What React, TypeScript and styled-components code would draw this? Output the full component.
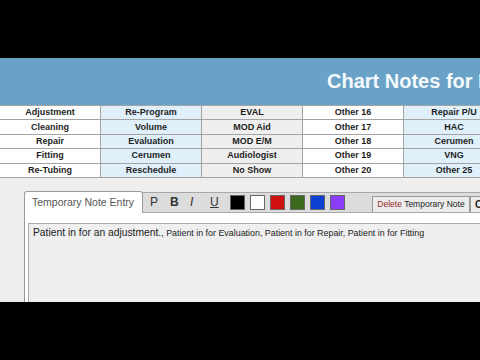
import styled, { createGlobalStyle } from "styled-components";

const Global = createGlobalStyle`
  html, body {
    margin: 0;
    padding: 0;
    background: #000;
    font-family: "Liberation Sans", Arial, sans-serif;
  }
`;

// letterbox frame
const Frame = styled.div`
  width: 480px;
  height: 360px;
  background: #000;
  padding-top: 58px;
  box-sizing: border-box;
  overflow: hidden;
`;

const Page = styled.div`
  width: 480px;
  height: 244px;
  background: #eeeeee;
  overflow: hidden;
`;

// Header TOP
const Header = styled.div`
  height: 47px;
  background: #69a2c6;
  display: flex;
  align-items: center;
  padding-left: 327px;
  color: #f4f9fc;
  font-weight: bold;
  font-size: 20px;
  white-space: nowrap;
  overflow: hidden;
`;

// Quick note table
const Table = styled.table`
  border-collapse: collapse;
  margin-left: -1px;
  border-top: 1px solid #8c9aa4;
`;

const Cell = styled.td<{ $bg: string }>`
  width: 100px;
  min-width: 100px;
  height: 13.4px;
  padding: 0;
  border: 1px solid #a4a4a4;
  background: ${(p) => p.$bg};
  color: #1e1e1e;
  font-size: 9px;
  font-weight: bold;
  text-align: center;
  line-height: 13px;
  white-space: nowrap;
`;

// Note panel
const Panel = styled.div`
  margin: 13px 0 0 24px;
  width: 500px;
`;

const TabRow = styled.div`
  display: flex;
  height: 22px;
`;

const Tab = styled.div`
  width: 119px;
  flex-shrink: 0;
  background: #fff;
  border: 1px solid #9a9a9a;
  border-bottom: none;
  border-radius: 3px 3px 0 0;
  color: #555;
  font-size: 10.5px;
  display: flex;
  align-items: center;
  padding-left: 7px;
  box-sizing: border-box;
  white-space: nowrap;
`;

const Toolbar = styled.div`
  flex: 1;
  background: #dcdcdc;
  border-top: 1px solid #a8a8a8;
  border-bottom: 1px solid #a8a8a8;
  display: flex;
  align-items: center;
  padding-left: 7px;
  margin-top: 1px;
`;

const Fmt = styled.span<{ $b?: boolean; $i?: boolean; $u?: boolean }>`
  width: 20px;
  font-size: 12px;
  color: #333;
  font-weight: ${(p) => (p.$b ? "bold" : "normal")};
  font-style: ${(p) => (p.$i ? "italic" : "normal")};
  text-decoration: ${(p) => (p.$u ? "underline" : "none")};
`;

const Swatch = styled.span<{ $c: string }>`
  width: 13px;
  height: 13px;
  margin-right: 5px;
  background: ${(p) => p.$c};
  border: 1px solid #666;
`;

const Spacer = styled.div`
  flex: 1;
`;

const ToolBtn = styled.button`
  align-self: flex-end;
  height: 16px;
  margin: 0;
  padding: 0 4px;
  background: #ececec;
  border: 1px solid #9a9a9a;
  border-bottom: none;
  font-family: inherit;
  font-size: 8.5px;
  color: #222;
  white-space: nowrap;
  text-align: left;
  cursor: pointer;
`;

const DelBtn = styled(ToolBtn)`
  width: 98px;
  text-align: center;
`;

const ClearBtn = styled(ToolBtn)`
  width: 54px;
  border-right: none;
  font-size: 10px;
`;

const Red = styled.span`
  color: #9a1f1f;
`;

const Body = styled.div`
  background: #fff;
  border-left: 1px solid #9a9a9a;
  padding: 10px 0 0 3px;
`;

const NoteBox = styled.div`
  height: 100px;
  background: #efefef;
  border: 1px solid #a8a8a8;
  border-right: none;
  padding: 3px 4px;
  color: #222;
  font-size: 10.3px;
  white-space: nowrap;
`;

const Small = styled.span`
  font-size: 8.9px;
`;

const cols = ["#fff", "#dff0fb", "#efefef", "#fff", "#dff0fb"];

const rows = [
  ["Adjustment", "Re-Program", "EVAL", "Other 16", "Repair P/U"],
  ["Cleaning", "Volume", "MOD Aid", "Other 17", "HAC"],
  ["Repair", "Evaluation", "MOD E/M", "Other 18", "Cerumen"],
  ["Fitting", "Cerumen", "Audiologist", "Other 19", "VNG"],
  ["Re-Tubing", "Reschedule", "No Show", "Other 20", "Other 25"],
];

const colors = ["#000", "#fff", "#d01010", "#3b6a1e", "#0d3fd0", "#8a3cf6"];

export default function App() {
  return (
    <>
      <Global />
      <Frame>
        <Page>
          <Header>Chart Notes for Patient</Header>
          <Table>
            <tbody>
              {rows.map((r) => (
                <tr key={r[0]}>
                  {r.map((c, i) => (
                    <Cell key={i} $bg={cols[i]}>
                      {c}
                    </Cell>
                  ))}
                </tr>
              ))}
            </tbody>
          </Table>
          <Panel>
            <TabRow>
              <Tab>Temporary Note Entry</Tab>
              <Toolbar>
                <Fmt>P</Fmt>
                <Fmt $b>B</Fmt>
                <Fmt $i>I</Fmt>
                <Fmt $u>U</Fmt>
                {colors.map((c) => (
                  <Swatch key={c} $c={c} />
                ))}
                <Spacer />
                <DelBtn>
                  <Red>Delete</Red> Temporary Note
                </DelBtn>
                <ClearBtn>
                  <b>Clear</b>
                </ClearBtn>
              </Toolbar>
            </TabRow>
            <Body>
              <NoteBox>
                Patient in for an adjustment.
                <Small>
                  , Patient in for Evaluation, Patient in for Repair, Patient in for Fitting
                </Small>
              </NoteBox>
            </Body>
          </Panel>
        </Page>
      </Frame>
    </>
  );
}
